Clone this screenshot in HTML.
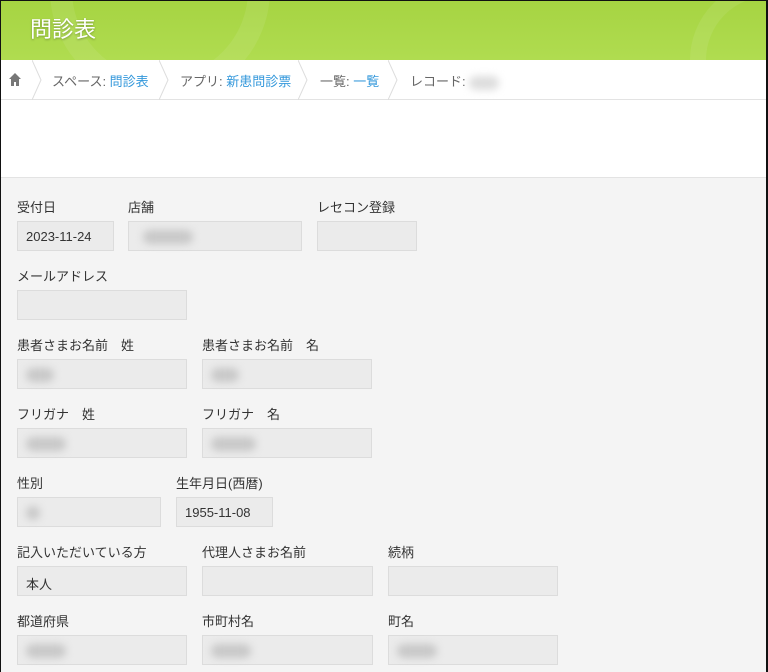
<!DOCTYPE html>
<html><head><meta charset="utf-8"><style>
*{box-sizing:border-box;margin:0;padding:0}
body{width:768px;height:672px;overflow:hidden;background:#fff;font-family:"Liberation Sans","Noto Sans CJK JP",sans-serif;position:relative}
.frame{position:absolute;left:0;top:0;width:768px;height:672px;border:1px solid #111;border-right:2px solid #111;border-bottom:none;z-index:10;pointer-events:none}
.hdr{position:absolute;left:0;top:0;width:768px;height:60px;background:linear-gradient(#a6d442,#b0dc50);overflow:hidden}
.hdr .t{position:absolute;left:30px;top:12px;font-size:22px;color:#fff;text-shadow:0 1px 2px rgba(0,0,0,.3)}
.sw{position:absolute;border-radius:50%;border:22px solid rgba(255,255,255,.08)}
.bc{position:absolute;left:0;top:60px;width:768px;height:40px;border-bottom:1px solid #e3e3e3;font-size:13px;color:#666}
.bc span{position:absolute;top:11px;white-space:nowrap}
.bc a{color:#3498db}
.sep{position:absolute;top:0;width:10px;height:40px}
.form{position:absolute;left:0;top:177px;width:768px;height:495px;background:#f4f4f4;border-top:1px solid #e3e3e3}
.l{position:absolute;font-size:13px;color:#333;margin-top:-2px}
.b{position:absolute;height:30px;background:#ebebeb;border:1px solid #dcdcdc;font-size:13px;color:#333;padding:7px 0 0 8px}
.bl{display:inline-block;height:14px;background:#c8c8c8;filter:blur(4px);border-radius:7px;margin-top:1px}
</style></head><body>
<div class="hdr"><div class="sw" style="left:50px;top:-120px;width:220px;height:220px"></div><div class="sw" style="left:690px;top:-20px;width:160px;height:160px;border-width:16px"></div><div class="t">問診表</div></div>
<div class="bc">
<svg style="position:absolute;left:9px;top:13px" width="12" height="13" viewBox="0 0 12 13"><path d="M6 0L0 6h2v7h3V9h2v4h3V6h2z" fill="#777"/></svg>
<svg class="sep" style="left:32px" viewBox="0 0 10 40"><path d="M0 0L9 20L0 40" fill="none" stroke="#ddd"/></svg>
<span style="left:52px">スペース: <a>問診表</a></span>
<svg class="sep" style="left:159px" viewBox="0 0 10 40"><path d="M0 0L9 20L0 40" fill="none" stroke="#ddd"/></svg>
<span style="left:180px">アプリ: <a>新患問診票</a></span>
<svg class="sep" style="left:298px" viewBox="0 0 10 40"><path d="M0 0L9 20L0 40" fill="none" stroke="#ddd"/></svg>
<span style="left:320px">一覧: <a>一覧</a></span>
<svg class="sep" style="left:388px" viewBox="0 0 10 40"><path d="M0 0L9 20L0 40" fill="none" stroke="#ddd"/></svg>
<span style="left:410px">レコード: <i class="bl" style="width:30px;background:#ddd;vertical-align:middle"></i></span>
</div>
<div class="form">
<div class="l" style="left:17px;top:21px">受付日</div><div class="l" style="left:128px;top:21px">店舗</div><div class="l" style="left:317px;top:21px">レセコン登録</div>
<div class="b" style="left:17px;top:43px;width:97px;padding-left:8px">2023-11-24</div>
<div class="b" style="left:128px;top:43px;width:174px"><i class="bl" style="width:50px;margin-left:6px"></i></div>
<div class="b" style="left:317px;top:43px;width:100px"></div>
<div class="l" style="left:17px;top:90px">メールアドレス</div>
<div class="b" style="left:17px;top:112px;width:170px"></div>
<div class="l" style="left:17px;top:159px">患者さまお名前　姓</div><div class="l" style="left:202px;top:159px">患者さまお名前　名</div>
<div class="b" style="left:17px;top:181px;width:170px"><i class="bl" style="width:28px"></i></div>
<div class="b" style="left:202px;top:181px;width:170px"><i class="bl" style="width:28px"></i></div>
<div class="l" style="left:17px;top:228px">フリガナ　姓</div><div class="l" style="left:202px;top:228px">フリガナ　名</div>
<div class="b" style="left:17px;top:250px;width:170px"><i class="bl" style="width:40px"></i></div>
<div class="b" style="left:202px;top:250px;width:170px"><i class="bl" style="width:45px"></i></div>
<div class="l" style="left:17px;top:297px">性別</div><div class="l" style="left:176px;top:297px">生年月日(西暦)</div>
<div class="b" style="left:17px;top:319px;width:144px"><i class="bl" style="width:14px"></i></div>
<div class="b" style="left:176px;top:319px;width:97px">1955-11-08</div>
<div class="l" style="left:17px;top:366px">記入いただいている方</div><div class="l" style="left:202px;top:366px">代理人さまお名前</div><div class="l" style="left:388px;top:366px">続柄</div>
<div class="b" style="left:17px;top:388px;width:170px">本人</div>
<div class="b" style="left:202px;top:388px;width:171px"></div>
<div class="b" style="left:388px;top:388px;width:170px"></div>
<div class="l" style="left:17px;top:435px">都道府県</div><div class="l" style="left:202px;top:435px">市町村名</div><div class="l" style="left:388px;top:435px">町名</div>
<div class="b" style="left:17px;top:457px;width:170px"><i class="bl" style="width:40px"></i></div>
<div class="b" style="left:202px;top:457px;width:171px"><i class="bl" style="width:40px"></i></div>
<div class="b" style="left:388px;top:457px;width:170px"><i class="bl" style="width:40px"></i></div>
</div>
<div class="frame"></div>
</body></html>
